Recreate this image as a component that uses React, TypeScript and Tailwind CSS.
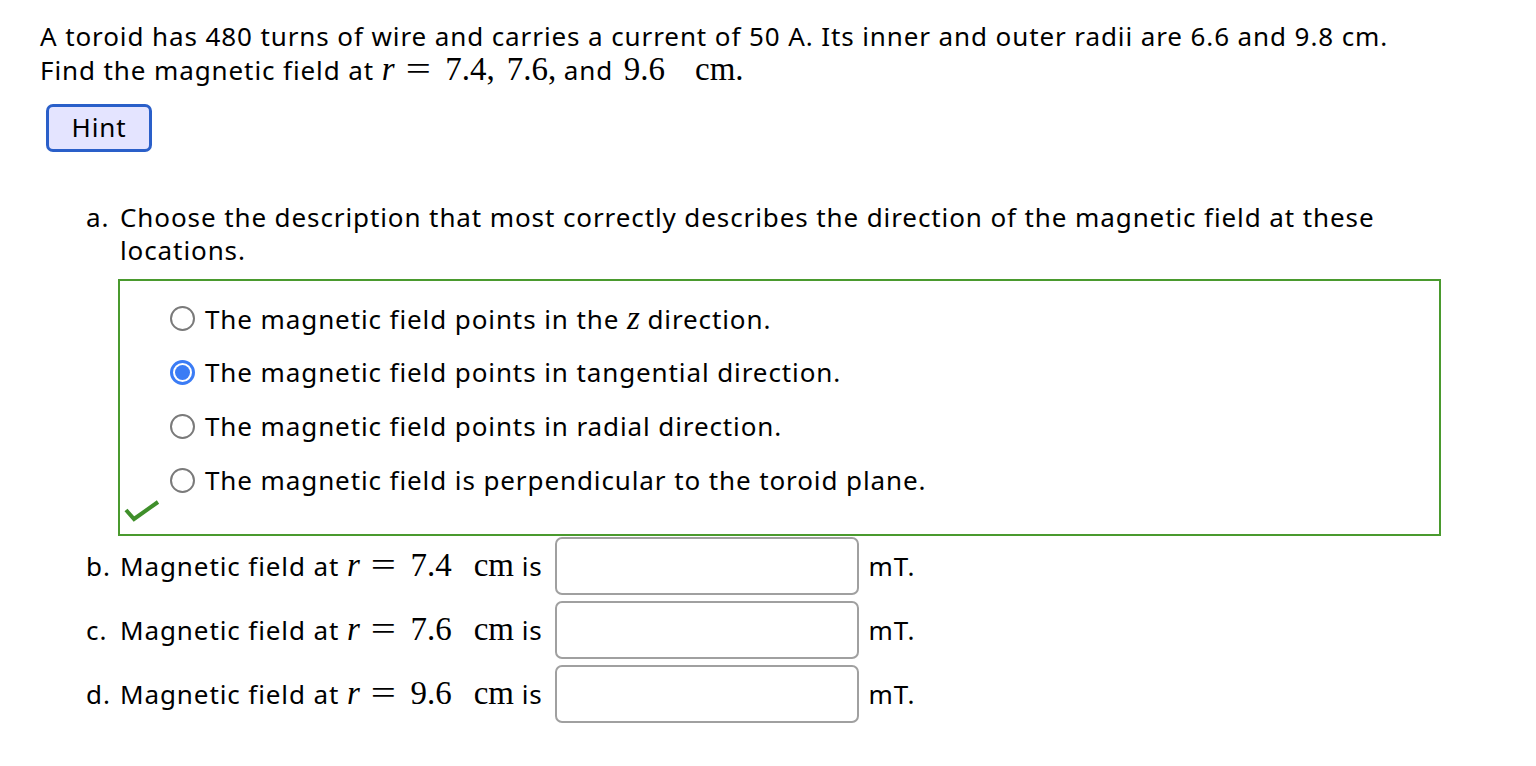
import { useState } from "react";

const sans = "font-['Noto_Sans','DejaVu_Sans',sans-serif] tracking-[0.9px]";
const mathFont = "font-['Liberation_Serif','DejaVu_Serif',serif] text-[33px] tracking-normal";

function M({ children, className = "" }: { children: React.ReactNode; className?: string }) {
  return <span className={`${mathFont} ${className}`}>{children}</span>;
}
function V({ children }: { children: React.ReactNode }) {
  return <span className={`${mathFont} italic`}>{children}</span>;
}
function Eq() {
  return <span className={`${mathFont} inline-block scale-x-[1.35] ml-[14px] mr-[18px]`}>=</span>;
}

const options = [
  <>The magnetic field points in the <V>z</V> direction.</>,
  <>The magnetic field points in tangential direction.</>,
  <>The magnetic field points in radial direction.</>,
  <>The magnetic field is perpendicular to the toroid plane.</>,
];

const parts = [
  { label: "b.", r: "7.4" },
  { label: "c.", r: "7.6" },
  { label: "d.", r: "9.6" },
];

export default function App() {
  const [choice, setChoice] = useState(1);
  const [vals, setVals] = useState(["", "", ""]);

  return (
    <div className={`${sans} text-[26px] text-black bg-white min-h-[766px] pl-[40px] pt-[20px]`}>
      <p className="leading-[33px]">
        A toroid has 480 turns of wire and carries a current of 50 A. Its inner and outer radii are 6.6 and 9.8 cm.
        <br />
        Find the magnetic field at <V>r</V>
        <Eq />
        <M>7.4,</M>
        <M className="ml-[12px]">7.6,</M> and <M className="ml-[3px]">9.6</M>
        <M className="ml-[30px]">cm.</M>
      </p>

      <button className="mt-[17px] ml-[6px] w-[106px] h-[48px] rounded-[7px] border-[3px] border-[#2a5fc9] bg-[#e4e4ff] text-[26px] leading-none pb-[3px]">
        Hint
      </button>

      <div className="mt-[49px] ml-[46px] flex leading-[33px] w-[1310px]">
        <span className="w-[34px] shrink-0">a.</span>
        <span>Choose the description that most correctly describes the direction of the magnetic field at these locations.</span>
      </div>

      <div className="mt-[12px] ml-[78px] w-[1323px] h-[257px] border-2 border-[#4a9a2e] relative">
        <div className="pt-[22px] pl-[50px] flex flex-col gap-[24px]">
          {options.map((o, i) => (
            <label key={i} className="flex items-center h-[30px] leading-[30px] cursor-pointer">
              <span
                onClick={() => setChoice(i)}
                className={`w-[25px] h-[25px] rounded-full shrink-0 mr-[10px] flex items-center justify-center ${
                  choice === i ? "border-[3px] border-[#3b7cf5]" : "border-2 border-[#7a7a7a]"
                }`}
              >
                {choice === i && <span className="w-[15px] h-[15px] rounded-full bg-[#3b7cf5]" />}
              </span>
              <span>{o}</span>
            </label>
          ))}
        </div>
        <svg className="absolute left-[3px] bottom-[12px]" width="38" height="22" viewBox="0 0 38 22">
          <path d="M3 10 L11 19 L35 2" fill="none" stroke="#3f8f2a" strokeWidth="4" />
        </svg>
      </div>

      <div className="ml-[46px] mt-[1px] flex flex-col gap-[6px]">
        {parts.map((p, i) => (
          <div key={p.label} className="flex items-center h-[58px]">
            <span className="w-[34px] shrink-0">{p.label}</span>
            <span className="whitespace-nowrap">
              Magnetic field at <V>r</V>
              <Eq />
              <M>{p.r}</M>
              <M className="ml-[22px]">cm</M> is
            </span>
            <input
              value={vals[i]}
              onChange={(e) => setVals(vals.map((v, j) => (j === i ? e.target.value : v)))}
              className="ml-[12px] w-[304px] h-[58px] rounded-[7px] border-2 border-[#a0a0a0] outline-none px-2 text-[26px]"
            />
            <span className="ml-[10px]">mT.</span>
          </div>
        ))}
      </div>
    </div>
  );
}
